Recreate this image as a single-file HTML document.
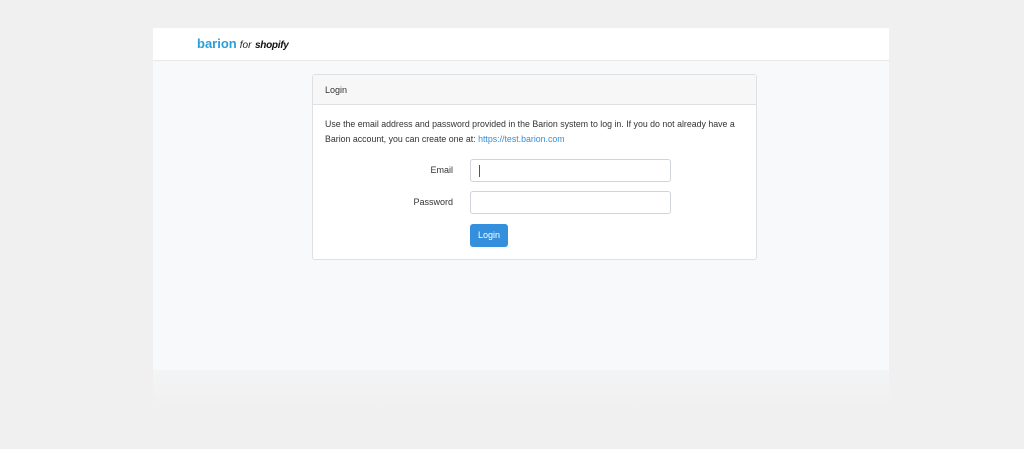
<!DOCTYPE html>
<html><head><style>
*{box-sizing:border-box;margin:0;padding:0}
body{width:1024px;height:449px;background:#f0f0f0;font-family:"Liberation Sans",sans-serif;position:relative;overflow:hidden;color:#212529}
.wrap{position:absolute;left:153px;top:28px;width:736px;height:380px;background:#f8f9fa}
.hdr{position:absolute;left:0;top:0;width:736px;height:33px;background:#fff;border-bottom:1px solid #e8e9ea}
.logo{position:absolute;left:44px;top:8px;font-size:13px;font-weight:bold;color:#2a9fd8;white-space:nowrap}
.logo i{font-size:10px;color:#222;font-weight:normal;margin-left:3px}
.logo b{font-size:10px;color:#111;font-style:italic;letter-spacing:-0.3px}
.fade{position:absolute;left:0;top:342px;width:736px;height:38px;background:linear-gradient(#f3f4f5,#f0f0f0)}
.card{position:absolute;left:159px;top:46px;width:445px;height:186px;background:#fff;border:1px solid #dfe0e1;border-radius:3px}
.ch{height:30px;background:#f7f7f7;border-bottom:1px solid #dfe0e1;font-size:9px;padding:10px 12px;color:#333}
.p{position:absolute;left:12px;top:42px;font-size:8.8px;line-height:15px;color:#333;width:424px}
.p a{color:#3490dc;text-decoration:none}
.lbl{position:absolute;font-size:9px;color:#333;text-align:right;width:100px;left:40px}
.in{position:absolute;left:157px;width:201px;height:23px;border:1px solid #ced4da;border-radius:3px;background:#fff}
.btn{position:absolute;left:157px;top:149px;width:38px;height:23px;background:#3490dc;border-radius:3px;color:#fff;font-size:9px;text-align:center;line-height:23px}
</style></head><body>
<div class="wrap">
<div class="hdr"><div class="logo">barion<i>for</i> <b>shopify</b></div></div>
<div class="card">
<div class="ch">Login</div>
<div class="p">Use the email address and password provided in the Barion system to log in. If you do not already have a Barion account, you can create one at: <a>https://test.barion.com</a></div>
<div class="lbl" style="top:90px">Email</div>
<div class="in" style="top:84px"><div style="position:absolute;left:8px;top:5px;width:1px;height:12px;background:#555"></div></div>
<div class="lbl" style="top:122px">Password</div>
<div class="in" style="top:116px"></div>
<div class="btn">Login</div>
</div>
<div class="fade"></div>
</div>
</body></html>
